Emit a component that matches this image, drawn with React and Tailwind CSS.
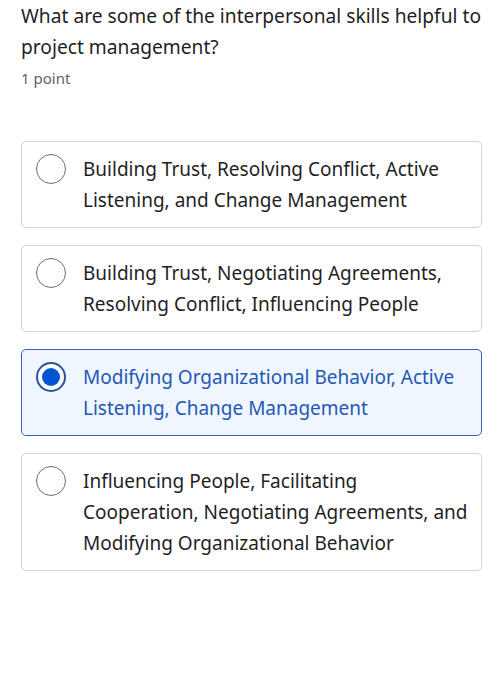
import React from "react";

const options = [
  { text: "Building Trust, Resolving Conflict, Active Listening, and Change Management", selected: false },
  { text: "Building Trust, Negotiating Agreements, Resolving Conflict, Influencing People", selected: false },
  { text: "Modifying Organizational Behavior, Active Listening, Change Management", selected: true },
  { text: "Influencing People, Facilitating Cooperation, Negotiating Agreements, and Modifying Organizational Behavior", selected: false },
];

function Radio({ selected }) {
  if (selected) {
    return (
      <div className="w-[30px] h-[30px] shrink-0 rounded-full border-2 border-[#2d4f9e] bg-white flex items-center justify-center">
        <div className="w-[18px] h-[18px] rounded-full bg-[#0056d2]" />
      </div>
    );
  }
  return <div className="w-[30px] h-[30px] shrink-0 rounded-full border-[1.5px] border-[#6f6f6f] bg-white" />;
}

export default function App() {
  return (
    <div className="min-h-[700px] bg-white pl-[21px] pr-[22px] font-['Noto_Sans',sans-serif]">
      <div className="text-[19.2px] leading-[31px] text-[#1f1f1f]">
        What are some of the interpersonal skills helpful to project management?
      </div>
      <div className="mt-[4px] text-[15px] leading-[24px] text-[#636363]">1 point</div>
      <div className="mt-[51px] flex flex-col gap-[17px]">
        {options.map((o, i) => (
          <div
            key={i}
            className={
              o.selected
                ? "flex items-start gap-[17px] rounded-[5px] border border-[#3c63b3] bg-[#f0f6ff] pl-[14px] pr-[12px] py-[11.5px]"
                : "flex items-start gap-[17px] rounded-[5px] border border-[#d3d3d3] bg-white pl-[14px] pr-[12px] py-[11.5px]"
            }
          >
            <div className="h-[31px] flex items-center">
              <Radio selected={o.selected} />
            </div>
            <div className={"text-[19px] leading-[31px] " + (o.selected ? "text-[#2358b5]" : "text-[#1f1f1f]")}>
              {o.text}
            </div>
          </div>
        ))}
      </div>
    </div>
  );
}
